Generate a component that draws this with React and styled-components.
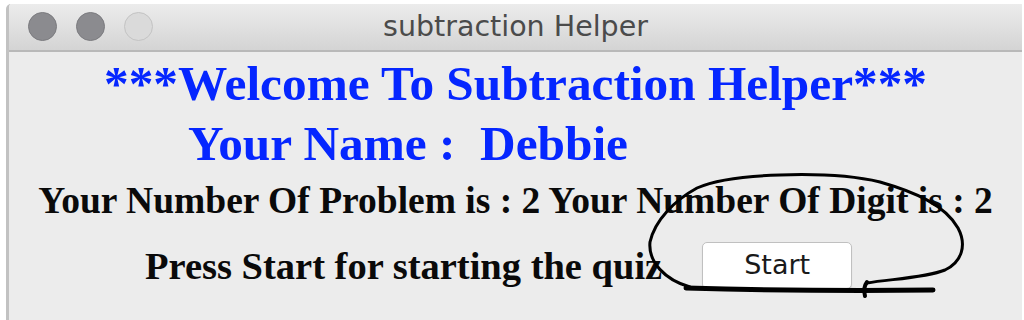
import React from "react";
import styled, { createGlobalStyle } from "styled-components";

const Global = createGlobalStyle`
  html, body { margin: 0; padding: 0; background: #ffffff; }
  body { width: 1024px; height: 320px; overflow: hidden; position: relative; }
`;

const Window = styled.div`
  margin: 4px 2px 0 6px;
  height: 316px;
  border-left: 3px solid #c2c2c2;
  border-top-left-radius: 5px;
  display: flex;
  flex-direction: column;
  background: #ececec;
  overflow: hidden;
`;

const TitleBar = styled.div`
  height: 46px;
  flex: none;
  border-bottom: 2px solid #b9b9b9;
  background: linear-gradient(#ececec, #d4d4d4);
  display: flex;
  align-items: center;
  position: relative;
  padding-left: 19px;
  gap: 19px;
`;

const Light = styled.span`
  width: 29px;
  height: 29px;
  border-radius: 50%;
  box-sizing: border-box;
  background: ${(p) => (p.$off ? "#dadada" : "#8b8b8f")};
  border: 1px solid ${(p) => (p.$off ? "#c3c3c3" : "#7b7b7f")};
  margin-top: -2px;
`;

const Title = styled.div`
  position: absolute;
  left: 0;
  right: 0;
  top: 0;
  bottom: 0;
  display: flex;
  align-items: center;
  justify-content: center;
  font-family: "DejaVu Sans", sans-serif;
  font-size: 28.5px;
  color: #4b4b4b;
  padding-bottom: 2px;
  pointer-events: none;
`;

const Content = styled.div`
  flex: 1;
  display: flex;
  flex-direction: column;
  padding-top: 7px;
`;

const Line = styled.div`
  font-family: "Liberation Serif", "Times New Roman", serif;
  font-weight: bold;
  font-size: ${(p) => p.$size}px;
  line-height: ${(p) => p.$size}px;
  color: ${(p) => (p.$blue ? "#0526ff" : "#0a0a0a")};
  margin-top: ${(p) => p.$top || 0}px;
  padding-left: ${(p) => p.$left || 0}px;
  text-align: ${(p) => (p.$left ? "left" : "center")};
  white-space: pre;
`;

const StartRow = styled.div`
  display: flex;
  align-items: center;
  margin-top: 23px;
  padding-left: 136px;
  gap: 40px;
`;

const PromptText = styled.span`
  font-family: "Liberation Serif", "Times New Roman", serif;
  font-weight: bold;
  font-size: 38.5px;
  line-height: 38px;
  color: #0a0a0a;
`;

const StartButton = styled.button`
  width: 150px;
  height: 47px;
  background: #ffffff;
  border: 1px solid #c0c0c0;
  border-radius: 5px;
  box-shadow: 0 1px 1px rgba(0, 0, 0, 0.12);
  font-family: "DejaVu Sans", sans-serif;
  font-size: 27px;
  color: #1a1a1a;
  padding: 0 0 2px 0;
`;

const Scribble = styled.svg`
  position: absolute;
  left: 0;
  top: 0;
  width: 1024px;
  height: 320px;
  pointer-events: none;
`;

export default function App() {
  return (
    <>
      <Global />
      <Window>
        <TitleBar>
          <Light />
          <Light />
          <Light $off />
          <Title>subtraction Helper</Title>
        </TitleBar>
        <Content>
          <Line $size={49.3} $blue>***Welcome To Subtraction Helper***</Line>
          <Line $size={49.3} $blue $top={11} $left={179}>
            {"Your Name :  Debbie"}
          </Line>
          <Line $size={37.5} $top={13}>
            Your Number Of Problem is : 2 Your Number Of Digit is : 2
          </Line>
          <StartRow>
            <PromptText>Press Start for starting the quiz</PromptText>
            <StartButton>Start</StartButton>
          </StartRow>
        </Content>
      </Window>
      <Scribble viewBox="0 0 1024 320">
        <path
          d="M 867 283 C 890 279, 925 278, 945 270 C 962 262, 967 245, 958 228 C 945 205, 915 192, 880 182 C 850 175, 810 174, 780 175 C 745 176, 715 180, 697 188 C 675 200, 655 220, 650 242 C 648 262, 665 280, 690 287"
          fill="none"
          stroke="#000"
          strokeWidth="3"
          strokeLinecap="round"
        />
        <path
          d="M 686 288 C 760 290, 860 291, 933 290"
          fill="none"
          stroke="#000"
          strokeWidth="5"
          strokeLinecap="round"
        />
        <path
          d="M 867 282 C 864 286, 864 292, 865 296"
          fill="none"
          stroke="#000"
          strokeWidth="4"
          strokeLinecap="round"
        />
      </Scribble>
    </>
  );
}
